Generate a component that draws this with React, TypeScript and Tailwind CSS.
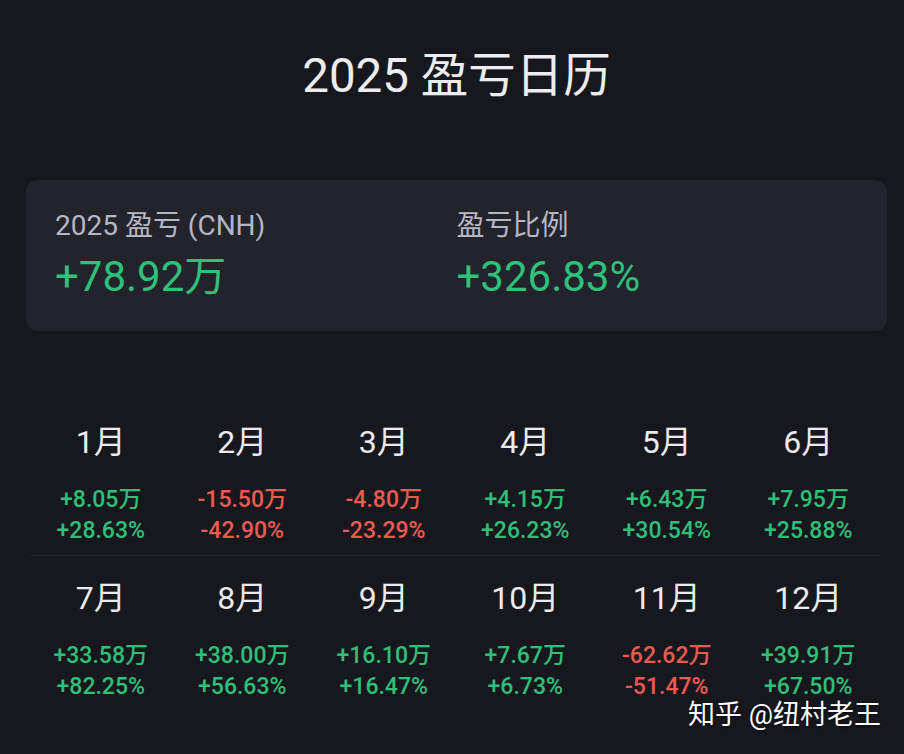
const months = [
  { m: "1月", v: "+8.05万", p: "+28.63%", up: true },
  { m: "2月", v: "-15.50万", p: "-42.90%", up: false },
  { m: "3月", v: "-4.80万", p: "-23.29%", up: false },
  { m: "4月", v: "+4.15万", p: "+26.23%", up: true },
  { m: "5月", v: "+6.43万", p: "+30.54%", up: true },
  { m: "6月", v: "+7.95万", p: "+25.88%", up: true },
  { m: "7月", v: "+33.58万", p: "+82.25%", up: true },
  { m: "8月", v: "+38.00万", p: "+56.63%", up: true },
  { m: "9月", v: "+16.10万", p: "+16.47%", up: true },
  { m: "10月", v: "+7.67万", p: "+6.73%", up: true },
  { m: "11月", v: "-62.62万", p: "-51.47%", up: false },
  { m: "12月", v: "+39.91万", p: "+67.50%", up: true },
];

type Month = (typeof months)[number];

function MonthCell({ item }: { item: Month }) {
  const color = item.up ? "text-[#2fbf78]" : "text-[#ec5a50]";
  return (
    <div className="flex flex-col items-center">
      <div className="text-[32px] leading-[40px] text-[#ebebed]">{item.m}</div>
      <div className={`mt-[22px] flex flex-col items-center text-[23px] font-medium leading-[31px] ${color}`}>
        <span>{item.v}</span>
        <span>{item.p}</span>
      </div>
    </div>
  );
}

export default function App() {
  const rows = [months.slice(0, 6), months.slice(6)];

  return (
    <div className="relative min-h-[754px] w-[904px] bg-[#17181e] font-['Roboto','Noto_Sans_CJK_SC',sans-serif]">
      <h1 className="pl-[9px] pt-[48px] text-center text-[47.5px] leading-[56px] text-[#ededef]">2025 盈亏日历</h1>

      <div className="ml-[26px] mr-[17px] mt-[76px] grid h-[151px] grid-cols-2 rounded-[12px] bg-[#22232b] px-[29px] pt-[30px]">
        <div>
          <div className="text-[28px] leading-[32px] text-[#b6b6c6]">2025 盈亏 (CNH)</div>
          <div className="mt-[12px] text-[42px] leading-[46px] text-[#2fc07a]">+78.92万</div>
        </div>
        <div>
          <div className="text-[28px] leading-[32px] text-[#b6b6c6]">盈亏比例</div>
          <div className="mt-[12px] text-[42px] leading-[46px] text-[#2fc07a]">+326.83%</div>
        </div>
      </div>

      <div className="ml-[30px] mr-[25px] mt-[69px]">
        {rows.map((row, i) => (
          <div
            key={i}
            className={`grid grid-cols-6 pt-[22px] ${i === 0 ? "border-b border-[#23242b] pb-[9px]" : ""}`}
          >
            {row.map((item) => (
              <MonthCell key={item.m} item={item} />
            ))}
          </div>
        ))}
      </div>

      {/* watermark overlay */}
      <div className="absolute right-[23px] top-[697px] text-[27px] leading-[36px] text-white [text-shadow:0_1px_3px_rgba(0,0,0,0.7)]">
        知乎 @纽村老王
      </div>
    </div>
  );
}
